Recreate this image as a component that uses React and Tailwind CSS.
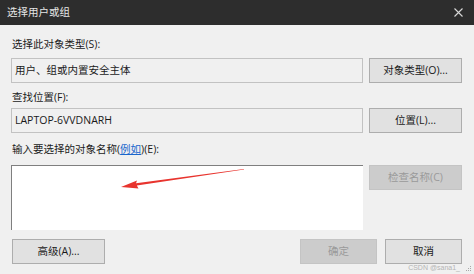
import React from "react";

const font = { fontFamily: '"Open Sans", "Noto Sans CJK SC", sans-serif' };

function Btn({ children, disabled, className = "" }) {
  return (
    <div
      className={
        "flex items-center justify-center h-[25px] border text-[10.5px] leading-none " +
        (disabled
          ? "bg-[#cccccc] border-[#c4c4c4] text-[#9a9a9a] "
          : "bg-[#e1e1e1] border-[#adadad] text-[#1a1a1a] ") +
        className
      }
    >
      {children}
    </div>
  );
}

export default function App() {
  return (
    <div className="w-[474px] h-[274px] bg-[#f0f0f0] relative overflow-hidden" style={font}>
      <div className="h-[25px] bg-[#2d2d2d] flex items-center justify-between pl-[7px] pr-[11px]">
        <span className="text-[10.5px] leading-none text-[#e6e6e6]">选择用户或组</span>
        <svg width="9" height="9" viewBox="0 0 9 9">
          <path d="M0.5 0.5 L8.5 8.5 M8.5 0.5 L0.5 8.5" stroke="#d8d8d8" strokeWidth="1.1" />
        </svg>
      </div>

      <div className="pl-[11px] pr-[12px] text-[#1a1a1a]">
        <div className="mt-[13px] h-[12px] pl-[1px] flex items-center text-[10.5px] leading-none">选择此对象类型(S):</div>
        <div className="mt-[8px] flex gap-[6px]">
          <div className="w-[352px] h-[25px] border border-[#c2c2c2] bg-[#f0f0f0] flex items-center pl-[3px] text-[10.5px] leading-none">
            用户、组或内置安全主体
          </div>
          <Btn className="w-[93px]">对象类型(O)...</Btn>
        </div>

        <div className="mt-[8px] h-[12px] pl-[1px] flex items-center text-[10.5px] leading-none">查找位置(F):</div>
        <div className="mt-[5px] flex gap-[6px]">
          <div className="w-[352px] h-[25px] border border-[#c2c2c2] bg-[#f0f0f0] flex items-center pl-[3px] text-[10.5px] leading-none">
            LAPTOP-6VVDNARH
          </div>
          <Btn className="w-[93px]">位置(L)...</Btn>
        </div>

        <div className="mt-[10px] h-[12px] pl-[1px] flex items-center text-[10.5px] leading-none">
          输入要选择的对象名称(<span className="text-[#1a66cc] underline">例如</span>)(E):
        </div>
        <div className="mt-[10px] flex gap-[6px] items-start">
          <div className="w-[352px] h-[65px] bg-white border-t border-l border-[#7f7f7f] relative">
            <svg className="absolute left-[108px] top-[2px]" width="126" height="22" viewBox="0 0 126 22">
              <path d="M124 1 L16 15.2 L17 12.5 L1 19 L18.5 20.6 L16.8 17.6 L124 1.6 Z" fill="#e8342e" />
            </svg>
          </div>
          <Btn disabled className="w-[93px]">检查名称(C)</Btn>
        </div>

        <div className="mt-[9px] flex items-center">
          <Btn className="w-[93px] ml-[1px]">高级(A)...</Btn>
          <div className="flex-1" />
          <Btn disabled className="w-[77px]">确定</Btn>
          <Btn className="w-[77px] ml-[8px]">取消</Btn>
        </div>
      </div>

      <div className="absolute right-[14px] bottom-[3px] text-[7px] leading-none text-[#b4b4b4]" style={{ fontFamily: '"Liberation Sans", sans-serif' }}>
        CSDN @sana1_
      </div>
      <svg className="absolute right-[2px] bottom-[2px]" width="6" height="6" viewBox="0 0 6 6">
        <rect x="4" y="0" width="1" height="1" fill="#a8a8a8" />
        <rect x="2" y="2" width="1" height="1" fill="#a8a8a8" />
        <rect x="4" y="2" width="1" height="1" fill="#a8a8a8" />
        <rect x="0" y="4" width="1" height="1" fill="#a8a8a8" />
        <rect x="2" y="4" width="1" height="1" fill="#a8a8a8" />
        <rect x="4" y="4" width="1" height="1" fill="#a8a8a8" />
      </svg>
    </div>
  );
}
